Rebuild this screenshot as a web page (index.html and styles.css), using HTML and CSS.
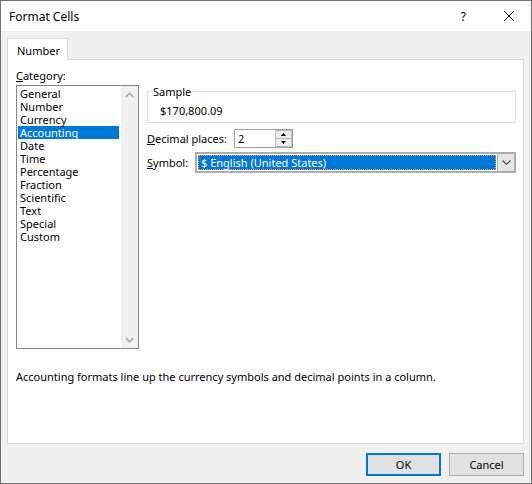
FILE: index.html
```html
<!DOCTYPE html>
<html>
<head>
<meta charset="utf-8">
<title>Format Cells</title>
<link rel="stylesheet" href="styles.css">
</head>
<body>
<div class="window">
  <div class="titlebar">
    <span class="title">Format Cells</span>
    <span class="help">?</span>
    <svg class="close" width="10" height="10" viewBox="0 0 10 10"><path d="M0 0L10 10M10 0L0 10" stroke="#000" stroke-width="1" fill="none"/></svg>
  </div>
  <div class="body">
    <div class="tabs"><div class="tab">Number</div></div>
    <div class="panel">
      <div class="main">
        <div class="left">
          <div class="label"><u>C</u>ategory:</div>
          <div class="list">
            <ul class="items">
              <li>General</li>
              <li>Number</li>
              <li>Currency</li>
              <li class="sel">Accounting</li>
              <li>Date</li>
              <li>Time</li>
              <li>Percentage</li>
              <li>Fraction</li>
              <li>Scientific</li>
              <li>Text</li>
              <li>Special</li>
              <li>Custom</li>
            </ul>
            <div class="scroll">
              <div class="sbtn"><svg width="9" height="6" viewBox="0 0 9 6"><path d="M0.8 5L4.5 1.3L8.2 5" stroke="#a6a6a6" stroke-width="1.6" fill="none"/></svg></div>
              <div class="sbtn"><svg width="9" height="6" viewBox="0 0 9 6"><path d="M0.8 1L4.5 4.7L8.2 1" stroke="#a6a6a6" stroke-width="1.6" fill="none"/></svg></div>
            </div>
          </div>
        </div>
        <div class="right">
          <div class="group">
            <span class="group-label">Sample</span>
            <div class="sample">$170,800.09</div>
          </div>
          <div class="row dec">
            <span class="lbl"><u>D</u>ecimal places:</span>
            <div class="spin">
              <span class="spin-val">2</span>
              <div class="spin-btns">
                <div class="spin-btn"><svg width="5" height="3" viewBox="0 0 5 3"><path d="M0 3L2.5 0L5 3Z" fill="#000"/></svg></div>
                <div class="spin-btn"><svg width="5" height="3" viewBox="0 0 5 3"><path d="M0 0L2.5 3L5 0Z" fill="#000"/></svg></div>
              </div>
            </div>
          </div>
          <div class="row sym">
            <span class="lbl"><u>S</u>ymbol:</span>
            <div class="combo">
              <span class="combo-sel">$ English (United States)</span>
              <span class="combo-btn"><svg width="9" height="5" viewBox="0 0 9 5"><path d="M0.5 0.5L4.5 4.3L8.5 0.5" stroke="#404040" stroke-width="1.1" fill="none"/></svg></span>
            </div>
          </div>
        </div>
      </div>
      <p class="desc">Accounting formats line up the currency symbols and decimal points in a column.</p>
    </div>
    <div class="buttons">
      <button class="btn default">OK</button>
      <button class="btn">Cancel</button>
    </div>
  </div>
</div>
</body>
</html>
```
FILE: styles.css
```css
body {
  margin: 0;
  font-family: "Noto Sans", "Open Sans", sans-serif;
  font-size: 11px;
  color: #000;
}
.window {
  width: 532px;
  height: 484px;
  box-sizing: border-box;
  border: 1px solid #707070;
  background: #f0f0f0;
  display: flex;
  flex-direction: column;
}
.titlebar {
  height: 30px;
  flex: none;
  background: #fff;
  display: flex;
  align-items: center;
}
.title {
  margin-left: 8px;
  flex: 1;
  font-size: 12px;
}
.help {
  margin-right: 38px;
  font-size: 12px;
}
.close {
  display: block;
  margin-right: 17px;
}
.body {
  flex: 1;
  padding: 7px 7px 0 6px;
  display: flex;
  flex-direction: column;
}
.tabs {
  display: flex;
  position: relative;
  z-index: 1;
  margin-bottom: -1px;
}
.tab {
  width: 61px;
  height: 22px;
  box-sizing: border-box;
  border: 1px solid #d9d9d9;
  border-bottom: none;
  background: #fff;
  padding-left: 9px;
  line-height: 23px;
}
.panel {
  height: 385px;
  box-sizing: border-box;
  border: 1px solid #d9d9d9;
  background: #fff;
  padding: 8px 7px 0 8px;
  display: flex;
  flex-direction: column;
}
.main {
  display: flex;
  gap: 8px;
}
.left {
  width: 123px;
  flex: none;
}
.label {
  height: 17px;
  line-height: 16px;
}
.list {
  height: 264px;
  box-sizing: border-box;
  border: 1px solid #828790;
  display: flex;
}
.items {
  list-style: none;
  margin: 0;
  padding: 1px 2px 0 1px;
  flex: 1;
}
.items li {
  height: 13px;
  line-height: 13px;
  padding-left: 2px;
}
.items li.sel {
  background: #0078d7;
  color: #fff;
}
.scroll {
  width: 17px;
  background: #f0f0f0;
  display: flex;
  flex-direction: column;
  justify-content: space-between;
}
.sbtn {
  height: 17px;
  display: flex;
  align-items: center;
  justify-content: center;
}
.right {
  flex: 1;
  padding-top: 23px;
}
.group {
  position: relative;
  height: 32px;
  box-sizing: border-box;
  border: 1px solid #dcdcdc;
  padding: 11px 0 0 12px;
}
.group-label {
  position: absolute;
  top: -8px;
  left: 3px;
  background: #fff;
  padding: 0 2px;
  line-height: 16px;
}
.sample {
  line-height: 16px;
}
.row {
  display: flex;
  align-items: center;
}
.lbl {
  white-space: nowrap;
}
.dec {
  margin-top: 6px;
}
.dec .lbl {
  width: 87px;
  flex: none;
}
.spin {
  width: 59px;
  height: 19px;
  box-sizing: border-box;
  border: 1px solid #a0a0a0;
  display: flex;
}
.spin-val {
  flex: 1;
  padding-left: 3px;
  line-height: 17px;
}
.spin-btns {
  width: 17px;
  display: flex;
  flex-direction: column;
}
.spin-btn {
  flex: 1;
  box-sizing: border-box;
  border: 1px solid #bcbcbc;
  background: #ececec;
  display: flex;
  align-items: center;
  justify-content: center;
}
.spin-btn + .spin-btn {
  border-top: none;
}
.sym {
  margin-top: 4px;
}
.sym .lbl {
  width: 48px;
  flex: none;
}
.combo {
  flex: 1;
  height: 21px;
  box-sizing: border-box;
  border: 2px solid #adadad;
  padding: 1px 0 1px 1px;
  background: #fff;
  display: flex;
}
.combo-sel {
  flex: 1;
  box-sizing: border-box;
  background: #0078d7;
  color: #fff;
  border: 1px dotted #f5a23a;
  padding-left: 2px;
  line-height: 13px;
  margin-right: 1px;
}
.combo-btn {
  width: 16px;
  margin: -1px 0;
  background: #e5e5e5;
  border-left: 1px solid #adadad;
  display: flex;
  align-items: center;
  justify-content: center;
}
.desc {
  margin: 20px 0 0;
  line-height: 16px;
}
.buttons {
  display: flex;
  justify-content: flex-end;
  gap: 8px;
  margin-top: 9px;
}
.btn {
  width: 75px;
  height: 23px;
  box-sizing: border-box;
  border: 1px solid #adadad;
  background: #e1e1e1;
  font: inherit;
  color: #000;
  padding: 0;
  display: flex;
  align-items: center;
  justify-content: center;
}
.btn.default {
  border: 2px solid #0078d7;
}
```
